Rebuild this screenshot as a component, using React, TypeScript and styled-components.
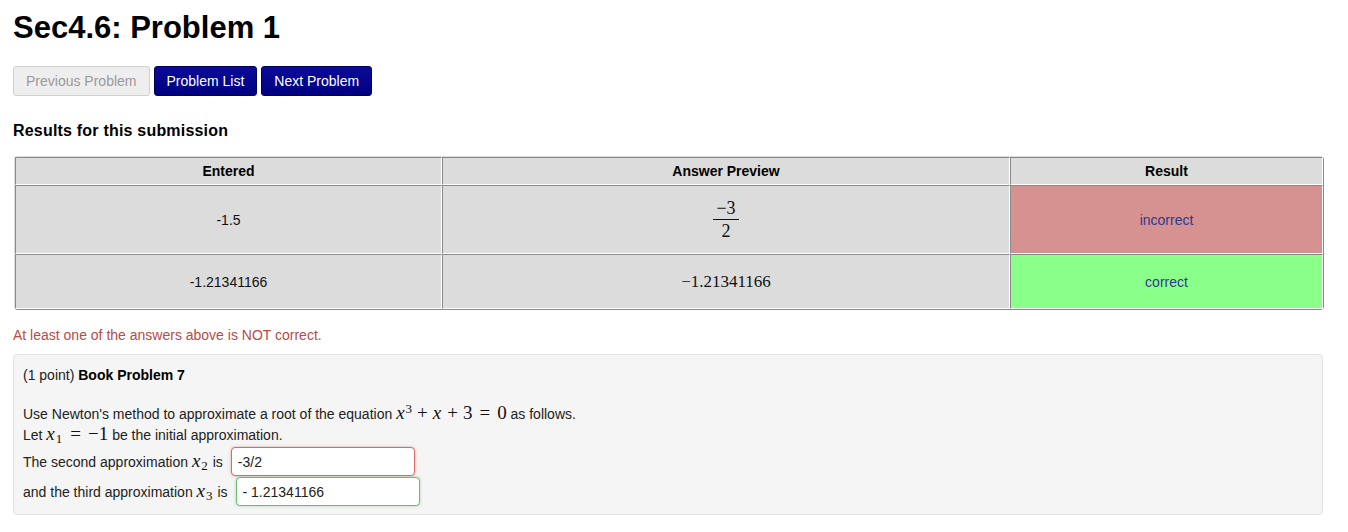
import React from "react";
import styled, { createGlobalStyle } from "styled-components";

const GlobalStyle = createGlobalStyle`
  html, body {
    margin: 0;
    padding: 0;
    background: #fff;
    font-family: Arial, "Liberation Sans", sans-serif;
    font-size: 14px;
    color: #333;
  }
`;

const Page = styled.div`
  padding: 0 25px 0 13px;
`;

const Title = styled.h1`
  margin: 0;
  padding-top: 9px;
  font-size: 31px;
  line-height: 38px;
  font-weight: bold;
  color: #000;
`;

const NavBar = styled.div`
  display: flex;
  gap: 4px;
  margin-top: 19px;
`;

const NavButton = styled.button<{ $disabled?: boolean }>`
  height: 30px;
  padding: 0 12px;
  font-family: Arial, "Liberation Sans", sans-serif;
  font-size: 14px;
  border-radius: 3px;
  border: 1px solid ${(p) => (p.$disabled ? "#cfcfcf" : "#00005a")};
  background: ${(p) =>
    p.$disabled ? "#eeeeee" : "linear-gradient(#0b0b9a, #000080)"};
  color: ${(p) => (p.$disabled ? "#9a9a9a" : "#fff")};
  cursor: ${(p) => (p.$disabled ? "default" : "pointer")};
`;

const SectionTitle = styled.h3`
  margin: 25px 0 0;
  font-size: 16px;
  line-height: 20px;
  letter-spacing: 0.2px;
  font-weight: bold;
  color: #000;
`;

const ResultsTable = styled.table`
  margin-top: 15px;
  margin-left: 1px;
  width: 1310px;
  border-collapse: separate;
  border-spacing: 0;
  border: 1px solid;
  border-color: #dcdcdc #8a8a8a #8a8a8a #dcdcdc;
  border-radius: 4px;
  table-layout: fixed;
`;

const HeadCell = styled.th`
  height: 26px;
  padding: 0;
  background: #dcdcdc;
  border: 1px solid;
  border-color: #8a8a8a #fff #fff #8a8a8a;
  font-size: 14px;
  font-weight: bold;
  color: #000;
  text-align: center;
`;

const Cell = styled.td<{ $status?: "correct" | "incorrect"; $h: number }>`
  height: ${(p) => p.$h}px;
  padding: 0;
  background: ${(p) =>
    p.$status === "correct"
      ? "#8aff8a"
      : p.$status === "incorrect"
      ? "#d69191"
      : "#dcdcdc"};
  color: ${(p) => (p.$status ? "#2d3b8f" : "#111")};
  border: 1px solid;
  border-color: #8a8a8a #fff #fff #8a8a8a;
  text-align: center;
  vertical-align: middle;
  font-size: 14px;
`;

const MathText = styled.span<{ $size?: number }>`
  font-family: "Liberation Serif", "DejaVu Serif", serif;
  font-size: ${(p) => p.$size ?? 19}px;
  line-height: 0;
  color: #111;
  white-space: nowrap;
`;

const Var = styled.i`
  font-family: "Liberation Serif", "DejaVu Serif", serif;
  font-style: italic;
  margin-right: 1px;
`;

const Op = styled.span<{ $rel?: boolean }>`
  margin: 0 ${(p) => (p.$rel ? 7 : 5)}px;
`;

const Fraction = styled.span`
  display: inline-flex;
  flex-direction: column;
  align-items: center;
  vertical-align: middle;
  font-family: "Liberation Serif", "DejaVu Serif", serif;
  font-size: 18px;
  line-height: 19px;
  color: #111;
`;

const Numer = styled.span`
  padding: 0 3px 1px;
  border-bottom: 1.5px solid #111;
`;

const Denom = styled.span`
  padding-top: 2px;
`;

const ErrorText = styled.p`
  margin: 15px 0 0;
  color: #b94a48;
  font-size: 14px;
  line-height: 20px;
`;

const ProblemBox = styled.div`
  margin-top: 9px;
  width: 1290px;
  padding: 10px 9px 8px;
  background: #f5f5f5;
  border: 1px solid #e3e3e3;
  border-radius: 4px;
  color: #222;
  line-height: 20px;
`;

const Line = styled.div`
  height: 21px;
  line-height: 21px;
  white-space: nowrap;
`;

const Gap = styled.div`
  height: 19px;
`;

const AnswerRow = styled.div`
  display: flex;
  align-items: center;
  gap: 8px;
  margin-top: 1px;
`;

const AnswerInput = styled.input<{ $state: "correct" | "incorrect" }>`
  box-sizing: border-box;
  width: 184px;
  height: 29px;
  padding: 4px 6px;
  font-family: Arial, "Liberation Sans", sans-serif;
  font-size: 14px;
  color: #222;
  background: #fff;
  border-radius: 4px;
  border: 1px solid ${(p) => (p.$state === "correct" ? "#6abf6a" : "#d96a6a")};
  box-shadow: 0 0 3px
    ${(p) =>
      p.$state === "correct"
        ? "rgba(90, 180, 90, 0.5)"
        : "rgba(220, 90, 90, 0.5)"};
  outline: none;
`;

const Sub = styled.sub`
  font-size: 13px;
  font-style: normal;
  line-height: 0;
  vertical-align: -3px;
  margin-right: 1px;
`;

const Sup = styled.sup`
  font-size: 13px;
  font-style: normal;
  line-height: 0;
  vertical-align: 6px;
`;

const rows = [
  { entered: "-1.5", status: "incorrect" as const, h: 67, preview: "frac" },
  { entered: "-1.21341166", status: "correct" as const, h: 53, preview: "−1.21341166" },
];

export default function App() {
  return (
    <Page>
      <GlobalStyle />
      <Title>Sec4.6: Problem 1</Title>
      <NavBar>
        <NavButton $disabled>Previous Problem</NavButton>
        <NavButton>Problem List</NavButton>
        <NavButton>Next Problem</NavButton>
      </NavBar>

      <SectionTitle>Results for this submission</SectionTitle>
      <ResultsTable>
        <colgroup>
          <col style={{ width: 427 }} />
          <col style={{ width: 568 }} />
          <col style={{ width: 313 }} />
        </colgroup>
        <thead>
          <tr>
            <HeadCell>Entered</HeadCell>
            <HeadCell>Answer Preview</HeadCell>
            <HeadCell>Result</HeadCell>
          </tr>
        </thead>
        <tbody>
          {rows.map((r) => (
            <tr key={r.entered}>
              <Cell $h={r.h}>{r.entered}</Cell>
              <Cell $h={r.h}>
                {r.preview === "frac" ? (
                  <Fraction>
                    <Numer>−3</Numer>
                    <Denom>2</Denom>
                  </Fraction>
                ) : (
                  <MathText $size={17}>{r.preview}</MathText>
                )}
              </Cell>
              <Cell $h={r.h} $status={r.status}>
                {r.status}
              </Cell>
            </tr>
          ))}
        </tbody>
      </ResultsTable>

      <ErrorText>At least one of the answers above is NOT correct.</ErrorText>

      <ProblemBox>
        <div>
          (1 point) <b style={{ color: "#000" }}>Book Problem 7</b>
        </div>
        <Gap />
        <Line>
          Use Newton's method to approximate a root of the equation{" "}
          <MathText>
            <Var>x</Var>
            <Sup>3</Sup>
            <Op>+</Op>
            <Var>x</Var>
            <Op>+</Op>3<Op $rel>=</Op>0
          </MathText>{" "}
          as follows.
        </Line>
        <Line>
          Let{" "}
          <MathText>
            <Var>x</Var>
            <Sub>1</Sub>
            <Op $rel>=</Op>−1
          </MathText>{" "}
          be the initial approximation.
        </Line>
        <AnswerRow>
          <span>
            The second approximation{" "}
            <MathText>
              <Var>x</Var>
              <Sub>2</Sub>
            </MathText>{" "}
            is
          </span>
          <AnswerInput $state="incorrect" defaultValue="-3/2" />
        </AnswerRow>
        <AnswerRow>
          <span>
            and the third approximation{" "}
            <MathText>
              <Var>x</Var>
              <Sub>3</Sub>
            </MathText>{" "}
            is
          </span>
          <AnswerInput $state="correct" defaultValue="- 1.21341166" />
        </AnswerRow>
      </ProblemBox>
    </Page>
  );
}
